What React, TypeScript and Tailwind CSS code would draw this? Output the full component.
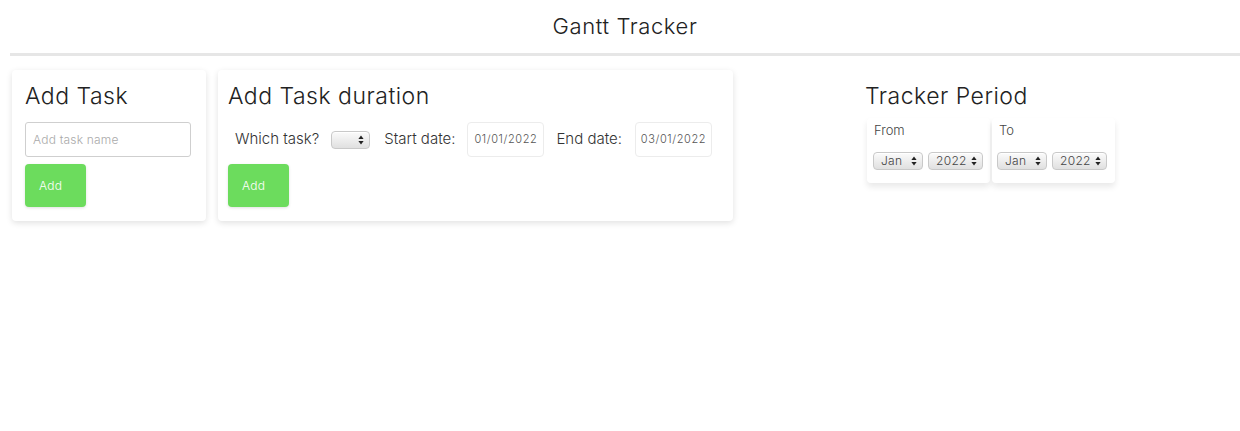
import * as React from "react";

const font = { fontFamily: "Inter, 'DejaVu Sans', sans-serif" };

function Arrows(): JSX.Element {
  return (
    <svg width="6" height="10" viewBox="0 0 6 10" className="shrink-0">
      <path d="M3 0.5 L5.6 4 L0.4 4 Z" fill="#222" />
      <path d="M3 9.5 L5.6 6 L0.4 6 Z" fill="#222" />
    </svg>
  );
}

function FakeSelect({ value, width }: { value?: string; width: string }): JSX.Element {
  return (
    <div
      className={`${width} h-[18px] flex items-center justify-between pl-[7px] pr-[5px] rounded-[4px] border border-[#c9c9c9] bg-gradient-to-b from-[#fbfbfb] to-[#e0e0e0] shadow-[inset_0_1px_0_#fff] text-[12px] font-light tracking-[0.3px] text-[#444]`}
    >
      <span>{value ?? ""}</span>
      <Arrows />
    </div>
  );
}

function GreenButton(): JSX.Element {
  return (
    <button
      type="button"
      className="w-[61px] h-[43px] rounded-[4px] bg-[#6cdc5d] text-white text-[12px] font-light tracking-[0.3px] text-left pl-[14px] shadow-[0_1px_3px_rgba(0,0,0,0.12)]"
    >
      Add
    </button>
  );
}

export default function App(): JSX.Element {
  return (
    <div className="w-[1240px] h-[431px] bg-white text-[#222] overflow-hidden" style={font}>
      <div className="pl-[10px]">
        <header className="h-[53px] flex items-center justify-center">
          <h1 className="text-[22px] font-light tracking-[0.6px] text-[#222]">Gantt Tracker</h1>
        </header>
        <div className="h-[3px] bg-[#e6e6e6]" />

        <div className="flex items-start mt-[14px]">
          {/* Add Task */}
          <section className="ml-[2px] w-[194px] h-[151px] rounded-[4px] bg-white shadow-[0_2px_6px_rgba(0,0,0,0.12)] px-[13px] pt-[12px]">
            <h2 className="text-[23px] font-light tracking-[0.5px] leading-[28px]">Add Task</h2>
            <input
              placeholder="Add task name"
              className="mt-[12px] w-[166px] h-[35px] rounded-[3px] border border-[#cfcfcf] px-[7px] text-[12px] font-light tracking-[0.2px] placeholder:text-[#aaa] outline-none"
            />
            <div className="mt-[7px]">
              <GreenButton />
            </div>
          </section>

          {/* Add Task duration */}
          <section className="ml-[12px] w-[515px] h-[151px] rounded-[4px] bg-white shadow-[0_2px_6px_rgba(0,0,0,0.12)] px-[10px] pt-[12px]">
            <h2 className="text-[23px] font-light tracking-[0.5px] leading-[28px]">Add Task duration</h2>
            <div className="mt-[12px] flex items-center h-[35px] text-[15px] font-light text-[#333]">
              <span className="ml-[7px]">Which task?</span>
              <div className="ml-[12px]">
                <FakeSelect width="w-[39px]" />
              </div>
              <span className="ml-[14px]">Start date:</span>
              <div className="ml-[12px] w-[77px] h-[35px] rounded-[4px] border border-[#ececec] flex items-center justify-center text-[11px] tracking-[0.6px] text-[#555] font-light">
                01/01/2022
              </div>
              <span className="ml-[12px]">End date:</span>
              <div className="ml-[13px] w-[77px] h-[35px] rounded-[4px] border border-[#ececec] flex items-center justify-center text-[11px] tracking-[0.6px] text-[#555] font-light">
                03/01/2022
              </div>
            </div>
            <div className="mt-[7px]">
              <GreenButton />
            </div>
          </section>

          {/* Tracker Period */}
          <section className="ml-[132px] pt-[12px]">
            <h2 className="text-[23px] font-light tracking-[0.5px] leading-[28px]">Tracker Period</h2>
            <div className="flex items-start">
              <div className="ml-[2px] mt-[8px] w-[123px] h-[65px] rounded-[4px] bg-white shadow-[0_4px_6px_rgba(0,0,0,0.09)] px-[6px] pt-[3px]">
                <div className="text-[13px] font-light text-[#444] h-[18px] pl-[1px]">From</div>
                <div className="mt-[13px] flex gap-[5px]">
                  <FakeSelect value="Jan" width="w-[50px]" />
                  <FakeSelect value="2022" width="w-[55px]" />
                </div>
              </div>
              <div className="ml-[2px] mt-[8px] w-[123px] h-[65px] rounded-[4px] bg-white shadow-[0_4px_6px_rgba(0,0,0,0.09)] px-[5px] pt-[3px]">
                <div className="text-[13px] font-light text-[#444] h-[18px] pl-[2px]">To</div>
                <div className="mt-[13px] flex gap-[5px]">
                  <FakeSelect value="Jan" width="w-[50px]" />
                  <FakeSelect value="2022" width="w-[55px]" />
                </div>
              </div>
            </div>
          </section>
        </div>
      </div>
    </div>
  );
}
